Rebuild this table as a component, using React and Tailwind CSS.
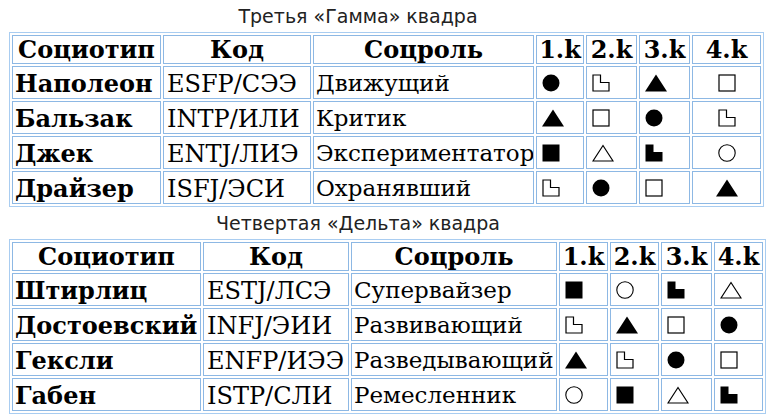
import React from "react";

function Shape({ t }) {
  const common = { className: "inline-block align-middle" };
  switch (t) {
    case "C":
      return (
        <svg {...common} width="18" height="18" viewBox="0 0 18 18">
          <circle cx="9" cy="9" r="8.5" fill="#000" />
        </svg>
      );
    case "c":
      return (
        <svg {...common} width="18" height="18" viewBox="0 0 18 18">
          <circle cx="9" cy="9" r="8.2" fill="none" stroke="#000" strokeWidth="1.1" />
        </svg>
      );
    case "T":
      return (
        <svg {...common} width="22" height="18" viewBox="0 0 22 18">
          <polygon points="0,17.5 11,0.5 22,17.5" fill="#000" />
        </svg>
      );
    case "t":
      return (
        <svg {...common} width="22" height="18" viewBox="0 0 22 18">
          <polygon points="1,17 11,1.5 21,17" fill="none" stroke="#000" strokeWidth="1.2" strokeLinejoin="miter" />
        </svg>
      );
    case "S":
      return (
        <svg {...common} width="18" height="18" viewBox="0 0 18 18">
          <rect x="0.5" y="0.5" width="17" height="17" fill="#000" />
        </svg>
      );
    case "s":
      return (
        <svg {...common} width="18" height="18" viewBox="0 0 18 18">
          <rect x="1" y="1" width="16" height="16" fill="none" stroke="#000" strokeWidth="1.2" />
        </svg>
      );
    case "L":
      return (
        <svg {...common} width="18" height="18" viewBox="0 0 18 18">
          <path d="M0.5 0.5 H8.5 V8 H17.5 V17.5 H0.5 Z" fill="#000" />
        </svg>
      );
    case "l":
      return (
        <svg {...common} width="18" height="18" viewBox="0 0 18 18">
          <path d="M1 1 H8.5 V8.5 H17 V17 H1 Z" fill="none" stroke="#000" strokeWidth="1.2" />
        </svg>
      );
    default:
      return null;
  }
}

const gamma = [
  ["Наполеон", "ESFP/СЭЭ", "Движущий", "C", "l", "T", "s"],
  ["Бальзак", "INTP/ИЛИ", "Критик", "T", "s", "C", "l"],
  ["Джек", "ENTJ/ЛИЭ", "Экспериментатор", "S", "t", "L", "c"],
  ["Драйзер", "ISFJ/ЭСИ", "Охранявший", "l", "C", "s", "T"],
];

const delta = [
  ["Штирлиц", "ESTJ/ЛСЭ", "Супервайзер", "S", "c", "L", "t"],
  ["Достоевский", "INFJ/ЭИИ", "Развивающий", "l", "T", "s", "C"],
  ["Гексли", "ENFP/ИЭЭ", "Разведывающий", "T", "l", "C", "s"],
  ["Габен", "ISTP/СЛИ", "Ремесленник", "c", "S", "t", "L"],
];

const serif = { fontFamily: '"DejaVu Serif", serif' };

function Quadra({ title, rows, widths, centerLast }) {
  return (
    <div className="flex flex-col">
      <div
        className="h-[32px] flex items-center justify-center pr-[52px] text-[19px] text-[#222]"
        style={{ fontFamily: '"DejaVu Sans", Verdana, sans-serif' }}
      >
        {title}
      </div>
      <table
        className="ml-[9px] table-fixed border-separate border-spacing-[2px] border border-[#a9cdf1] text-black"
        style={{ ...serif, width: 755 }}
      >
        <colgroup>
          {widths.map((w, i) => (
            <col key={i} style={{ width: w }} />
          ))}
        </colgroup>
        <thead>
          <tr>
            {["Социотип", "Код", "Соцроль", "1.k", "2.k", "3.k", "4.k"].map((h, i) => (
              <th
                key={i}
                className="h-[29px] border border-[#8db8e4] p-0 text-center text-[24px] font-bold leading-none whitespace-nowrap overflow-hidden"
              >
                {h}
              </th>
            ))}
          </tr>
        </thead>
        <tbody>
          {rows.map((r, ri) => (
            <tr key={ri}>
              <td className="h-[33px] border border-[#8db8e4] px-[2px] pt-[2px] pb-0 text-[24px] font-bold leading-none whitespace-nowrap overflow-hidden">
                {r[0]}
              </td>
              <td className="border border-[#8db8e4] px-[3px] pt-[2px] pb-0 text-[24px] leading-none whitespace-nowrap overflow-hidden">
                {r[1]}
              </td>
              <td className="border border-[#8db8e4] px-[2px] pt-[2px] pb-0 text-[23px] leading-none whitespace-nowrap overflow-hidden">
                {r[2]}
              </td>
              {r.slice(3).map((s, si) => (
                <td
                  key={si}
                  className={
                    "border border-[#8db8e4] py-0 leading-none " +
                    (centerLast && si === 3 ? "text-center" : "pl-[5px] text-left")
                  }
                >
                  <Shape t={s} />
                </td>
              ))}
            </tr>
          ))}
        </tbody>
      </table>
    </div>
  );
}

export default function App() {
  return (
    <div className="w-[768px] h-[416px] bg-white overflow-hidden">
      <Quadra
        title="Третья «Гамма» квадра"
        rows={gamma}
        widths={[149, 148, 221, 48, 51, 51, 69]}
        centerLast
      />
      <Quadra
        title="Четвертая «Дельта» квадра"
        rows={delta}
        widths={[189, 146, 206, 49, 49, 51, 49]}
      />
    </div>
  );
}
